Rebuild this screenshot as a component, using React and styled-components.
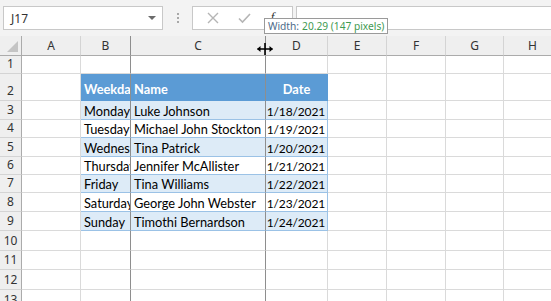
import React from "react";
import styled, { createGlobalStyle } from "styled-components";

const GlobalStyle = createGlobalStyle`
  html, body {
    margin: 0;
    padding: 0;
    background: #ffffff;
    overflow: hidden;
  }
`;

const Page = styled.div`
  position: relative;
  width: 551px;
  height: 301px;
  overflow: hidden;
  background: #ffffff;
  font-family: Lato, "Liberation Sans", sans-serif;
`;

const FormulaBar = styled.div`
  display: flex;
  align-items: center;
  height: 36px;
  padding-left: 3px;
  box-sizing: border-box;
  background: #f3f3f3;
`;

const NameBox = styled.div`
  display: flex;
  align-items: center;
  justify-content: space-between;
  width: 160px;
  height: 24px;
  box-sizing: border-box;
  padding: 0 6px 0 7px;
  background: #ffffff;
  border: 1px solid #c8c8c8;
  font-family: "Noto Sans", sans-serif;
  font-size: 12px;
  color: #333;
`;

const Caret = styled.span`
  width: 0;
  height: 0;
  border-left: 4px solid transparent;
  border-right: 4px solid transparent;
  border-top: 4px solid #6b6b6b;
`;

const Grip = styled.div`
  display: flex;
  flex-direction: column;
  align-items: center;
  gap: 2px;
  width: 29px;
  span {
    width: 2px;
    height: 2px;
    background: #a8a8a8;
  }
`;

const ButtonBox = styled.div`
  display: flex;
  align-items: center;
  justify-content: space-around;
  width: 101px;
  height: 24px;
  box-sizing: border-box;
  padding: 0 4px;
  background: #ffffff;
  border: 1px solid #c8c8c8;
`;

const Fx = styled.span`
  font-family: "Liberation Serif", serif;
  font-style: italic;
  font-size: 13px;
  color: #333;
  sub {
    font-size: 9px;
  }
`;

const FormulaInput = styled.div`
  flex: 1;
  height: 24px;
  margin-left: 3px;
  margin-right: -2px;
  box-sizing: border-box;
  background: #ffffff;
  border: 1px solid #c8c8c8;
`;

const Tooltip = styled.div`
  position: absolute;
  left: 264px;
  top: 18px;
  height: 16px;
  padding: 0 3px;
  box-sizing: border-box;
  display: flex;
  align-items: center;
  background: #ffffff;
  border: 1px solid #9a9a9a;
  font-family: "Noto Sans", sans-serif;
  font-size: 10.2px;
  white-space: nowrap;
  color: #4d6b8a;
  b {
    font-weight: normal;
    color: #3f9a52;
    margin-left: 3px;
  }
`;

const Cursor = styled.svg`
  position: absolute;
  left: 256px;
  top: 42px;
`;

const Sheet = styled.div`
  display: grid;
  grid-template-columns: 22px 59px 50px 135px 62px 59px 59px 58px 58px 60px;
  width: 622px;
`;

const Cell = styled.div`
  box-sizing: border-box;
  height: ${p => p.h}px;
  display: flex;
  align-items: flex-end;
  justify-content: ${p => (p.right ? "flex-end" : p.center ? "center" : "flex-start")};
  padding: 0 ${p => (p.right ? 2 : 3)}px 0;
  overflow: hidden;
  white-space: nowrap;
  font-size: ${p => (p.right ? 12 : 12.8)}px;
  letter-spacing: ${p => (p.right ? "-0.15px" : "normal")};
  line-height: 15px;
  color: #000;
  background: ${p => p.bg || "#ffffff"};
  border-right: 1px solid ${p => p.rb || "#dadada"};
  border-bottom: 1px solid ${p => p.bb || "#dadada"};
  font-weight: ${p => (p.bold ? 700 : 400)};
  ${p => p.bold && "color: #ffffff; padding-bottom: 3px; font-size: 12.8px; letter-spacing: normal;"}
`;

const ColHead = styled.div`
  box-sizing: border-box;
  height: 20px;
  display: flex;
  align-items: center;
  justify-content: center;
  background: #efefef;
  border-right: 1px solid ${p => p.rb || "#d4d4d4"};
  border-bottom: 1px solid #ababab;
  font-family: "Noto Sans", sans-serif;
  font-size: 12px;
  color: #333;
`;

const RowHead = styled.div`
  box-sizing: border-box;
  height: ${p => p.h}px;
  display: flex;
  align-items: flex-end;
  justify-content: center;
  padding-bottom: 1px;
  background: #efefef;
  border-right: 1px solid #ababab;
  border-bottom: 1px solid #d4d4d4;
  font-family: "Noto Sans", sans-serif;
  font-size: 12px;
  color: #333;
`;

const Corner = styled.div`
  box-sizing: border-box;
  height: 20px;
  background: #efefef;
  border-right: 1px solid #ababab;
  border-bottom: 1px solid #ababab;
  display: flex;
  align-items: flex-end;
  justify-content: flex-end;
  padding: 0 3px 3px 0;
`;

const GUIDE = "#8e8e8e";
const TBL_LINE = "#9bc2e6";
const TBL_FILL = "#ddebf7";
const TBL_HEAD = "#5b9bd5";

const cols = ["A", "B", "C", "D", "E", "F", "G", "H", "I"];
const heights = [18, 27, 19, 18, 19, 18, 18, 19, 19, 20, 19, 20, 20];

const data = [
  ["Monday", "Luke Johnson", "1/18/2021"],
  ["Tuesday", "Michael John Stockton", "1/19/2021"],
  ["Wednesday", "Tina Patrick", "1/20/2021"],
  ["Thursday", "Jennifer McAllister", "1/21/2021"],
  ["Friday", "Tina Williams", "1/22/2021"],
  ["Saturday", "George John Webster", "1/23/2021"],
  ["Sunday", "Timothi Bernardson", "1/24/2021"],
];

const guideRight = c => (c === 1 || c === 2 ? GUIDE : undefined);

function renderRow(r) {
  const h = heights[r];
  const cells = [<RowHead key={`h${r}`} h={h}>{r + 1}</RowHead>];
  for (let c = 0; c < 9; c++) {
    let props = { h, rb: guideRight(c) };
    let text = "";
    if (r === 1 && c >= 1 && c <= 3) {
      props = { ...props, bg: TBL_HEAD, bold: true, bb: TBL_HEAD, rb: guideRight(c) || TBL_HEAD, center: c === 3 };
      text = ["Weekday", "Name", "Date"][c - 1];
    } else if (r >= 2 && r <= 8 && c >= 1 && c <= 3) {
      const row = data[r - 2];
      const odd = r % 2 === 0;
      props = {
        ...props,
        bg: odd ? TBL_FILL : "#ffffff",
        bb: TBL_LINE,
        rb: guideRight(c) || (c === 3 ? TBL_LINE : odd ? TBL_FILL : "#ffffff"),
        right: c === 3,
      };
      text = row[c - 1];
    }
    cells.push(
      <Cell key={`${r}-${c}`} {...props}>
        {text}
      </Cell>
    );
  }
  return cells;
}

export default function App() {
  return (
    <Page>
      <GlobalStyle />
      <FormulaBar>
        <NameBox>
          J17
          <Caret />
        </NameBox>
        <Grip>
          <span />
          <span />
          <span />
        </Grip>
        <ButtonBox>
          <svg width="12" height="12" viewBox="0 0 12 12">
            <path d="M1 1 L11 11 M11 1 L1 11" stroke="#b5b5b5" strokeWidth="1.4" fill="none" />
          </svg>
          <svg width="13" height="12" viewBox="0 0 13 12">
            <path d="M1 6.5 L4.5 10 L12 2" stroke="#b5b5b5" strokeWidth="1.6" fill="none" />
          </svg>
          <Fx>
            f<sub>x</sub>
          </Fx>
        </ButtonBox>
        <FormulaInput />
      </FormulaBar>

      <Sheet>
        <Corner>
          <svg width="11" height="11" viewBox="0 0 11 11">
            <polygon points="11,0 11,11 0,11" fill="#c4c4c4" />
          </svg>
        </Corner>
        {cols.map((l, i) => (
          <ColHead key={l} rb={guideRight(i)}>
            {l}
          </ColHead>
        ))}
        {heights.map((_, r) => renderRow(r))}
      </Sheet>

      <Tooltip>
        Width:<b>20.29 (147 pixels)</b>
      </Tooltip>

      <Cursor width="18" height="14" viewBox="0 0 18 14">
        <path d="M9 1 V13 M1.5 7 H16.5" stroke="#000" strokeWidth="1.6" fill="none" />
        <path d="M1 7 L4.5 4 V10 Z M17 7 L13.5 4 V10 Z" fill="#000" />
      </Cursor>
    </Page>
  );
}
